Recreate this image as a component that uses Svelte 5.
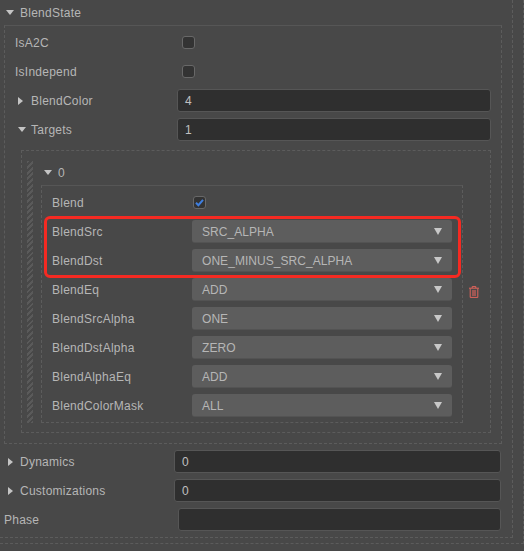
<script>
    const rows = [
        ["BlendSrc", "SRC_ALPHA"],
        ["BlendDst", "ONE_MINUS_SRC_ALPHA"],
        ["BlendEq", "ADD"],
        ["BlendSrcAlpha", "ONE"],
        ["BlendDstAlpha", "ZERO"],
        ["BlendAlphaEq", "ADD"],
        ["BlendColorMask", "ALL"],
    ];
</script>

<div class="page">
    <div class="frame-outer">
        <div class="frame-inner">
            <div class="head">
                <span class="arrow down"></span>
                <span>BlendState</span>
            </div>
            <div class="state">
                <div class="row">
                    <span class="label">IsA2C</span>
                    <span class="check"></span>
                </div>
                <div class="row">
                    <span class="label">IsIndepend</span>
                    <span class="check"></span>
                </div>
                <div class="row">
                    <span class="label tree"><span class="arrow right"></span>BlendColor</span>
                    <div class="input">4</div>
                </div>
                <div class="row">
                    <span class="label tree"><span class="arrow down"></span>Targets</span>
                    <div class="input">1</div>
                </div>

                <div class="targets">
                    <div class="hatch"></div>
                    <div class="target">
                        <div class="head zero">
                            <span class="arrow down"></span>
                            <span>0</span>
                        </div>
                        <div class="fields">
                            <div class="row">
                                <span class="label">Blend</span>
                                <span class="check on">
                                    <svg viewBox="0 0 13 13" width="13" height="13">
                                        <path d="M3 6.8 5.4 9.2 10 3.9" fill="none" stroke="#3f7fe0" stroke-width="2" />
                                    </svg>
                                </span>
                            </div>
                            {#each rows as [name, value]}
                                <div class="row">
                                    <span class="label">{name}</span>
                                    <div class="select">
                                        <span>{value}</span>
                                        <span class="caret"></span>
                                    </div>
                                </div>
                            {/each}
                            <div class="highlight"></div>
                        </div>
                    </div>
                    <div class="remove">
                        <svg viewBox="0 0 10 12" width="10" height="12">
                            <path d="M0 2.2H10M3.2 2V.6H6.8V2M1.2 2.5V11.4H8.8V2.5" fill="none" stroke="#e0645c" stroke-width="1" />
                            <path d="M3 4H7V10H3Z" fill="#e0645c" opacity="0.55" />
                        </svg>
                    </div>
                </div>
            </div>
            <div class="row bottom">
                <span class="label tree"><span class="arrow right"></span>Dynamics</span>
                <div class="input">0</div>
            </div>
            <div class="row bottom">
                <span class="label tree"><span class="arrow right"></span>Customizations</span>
                <div class="input">0</div>
            </div>
            <div class="row bottom phase">
                <span class="label">Phase</span>
                <div class="input"></div>
            </div>
        </div>
    </div>
</div>

<style>
    :global(body) {
        background: #484848;
    }

    .page {
        height: 551px;
        overflow: hidden;
        background: #484848;
        color: #b6b6b6;
        font-family: "Liberation Sans", Arial, sans-serif;
        font-size: 12px;
        letter-spacing: 0.25px;
    }

    .frame-outer {
        width: 544px;
        height: 564px;
        margin: -20px 0 0 -20px;
        box-sizing: border-box;
        border-right: 1px dashed #5c5c5c;
        border-bottom: 1px dashed #5c5c5c;
    }

    .frame-inner {
        width: 533px;
        height: 558px;
        box-sizing: border-box;
        padding: 21px 0 0 24px;
        border-right: 1px dashed #5c5c5c;
        border-bottom: 1px dashed #5c5c5c;
    }

    .head {
        display: flex;
        align-items: center;
        height: 23px;
        gap: 6px;
        padding-left: 2px;
    }

    .state {
        width: 498px;
        box-sizing: border-box;
        margin-top: 1px;
        padding: 5px 10px 10px 0;
        border: 1px dashed #5c5c5c;
        border-top: 1px solid #565656;
    }

    .row {
        display: flex;
        align-items: center;
        height: 23px;
    }

    .state > .row {
        margin-bottom: 6px;
        padding-left: 10px;
    }

    .label {
        flex: none;
        width: 162px;
    }

    .tree {
        display: flex;
        align-items: center;
        box-sizing: border-box;
        gap: 7px;
        padding-left: 3px;
    }

    .tree .arrow.down {
        margin-right: -2px;
    }

    .arrow {
        flex: none;
        width: 0;
        height: 0;
        border-style: solid;
        border-color: transparent;
    }

    .arrow.down {
        border-width: 5px 4px 0;
        border-top-color: #c4c4c4;
    }

    .arrow.right {
        margin-right: 1px;
        border-width: 4px 0 4px 5px;
        border-left-color: #c4c4c4;
    }

    .check {
        flex: none;
        width: 13px;
        height: 13px;
        margin-left: 5px;
        box-sizing: border-box;
        border: 1px solid #686868;
        border-radius: 3px;
        background: #333;
        display: flex;
        align-items: center;
        justify-content: center;
    }

    .check.on {
        margin-left: 1px;
    }

    .check svg {
        flex: none;
    }

    .input {
        flex: 1;
        height: 23px;
        box-sizing: border-box;
        padding-left: 7px;
        line-height: 22px;
        color: #c0c0c0;
        background: #2f2f2f;
        border: 1px solid #565656;
        border-radius: 3px;
    }

    .targets {
        display: flex;
        align-items: center;
        margin: 9px 0 0 16px;
        padding: 10px 0 9px 5px;
        border: 1px dashed #5c5c5c;
    }

    .hatch {
        align-self: stretch;
        flex: none;
        width: 6px;
        margin-right: 8px;
        background: repeating-linear-gradient(135deg, #5a5a5a 0 2px, #484848 2px 4px);
    }

    .target {
        flex: 1;
        min-width: 0;
    }

    .zero {
        padding-left: 3px;
    }

    .fields {
        position: relative;
        display: flex;
        flex-direction: column;
        gap: 6px;
        margin-top: 1px;
        padding: 5px 10px;
        border: 1px dashed #5c5c5c;
        border-top: 1px solid #565656;
    }

    .fields .label {
        width: 140px;
    }

    .select {
        flex: 1;
        display: flex;
        align-items: center;
        justify-content: space-between;
        height: 23px;
        box-sizing: border-box;
        padding: 1px 10px 0;
        letter-spacing: 0.05px;
        background: #5d5d5d;
        border-bottom: 1px solid #535353;
        border-radius: 3px;
    }

    .caret {
        width: 0;
        height: 0;
        border-style: solid;
        border-color: transparent;
        border-width: 7px 4px 0;
        border-top-color: #c8c8c8;
    }

    .highlight {
        position: absolute;
        top: 30px;
        left: 2px;
        width: 417px;
        height: 62px;
        box-sizing: border-box;
        border: 3px solid #f52a22;
        border-radius: 6px;
    }

    .remove {
        flex: none;
        width: 27px;
        box-sizing: border-box;
        padding-left: 6px;
        display: flex;
    }

    .bottom {
        width: 497px;
        margin-bottom: 6px;
    }

    .state + .bottom {
        margin-top: 6px;
    }

    .bottom .label {
        width: 170px;
    }

    .bottom .tree {
        gap: 6px;
        padding-left: 4px;
    }

    .phase .label {
        width: 174px;
    }
</style>
